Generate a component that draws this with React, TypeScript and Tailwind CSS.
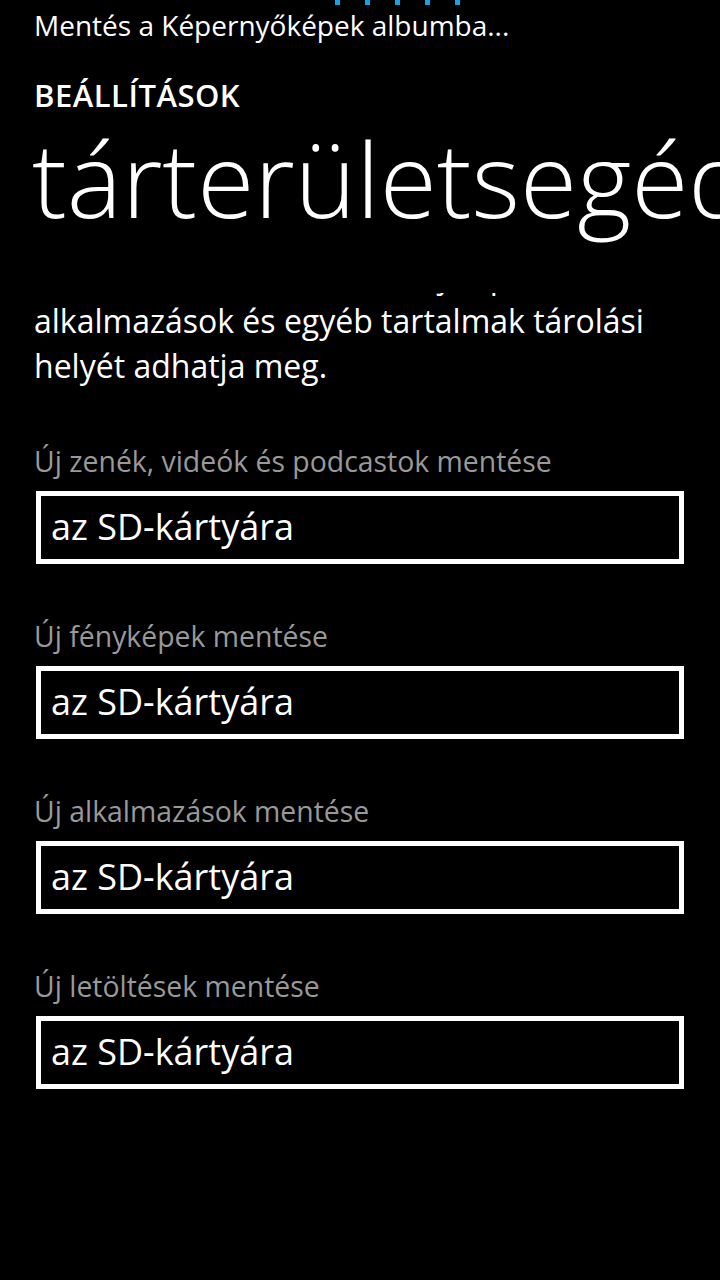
import React from "react";

const sections = [
  "Új zenék, videók és podcastok mentése",
  "Új fényképek mentése",
  "Új alkalmazások mentése",
  "Új letöltések mentése",
];

export default function App() {
  return (
    <div
      className="relative w-[720px] h-[1280px] overflow-hidden bg-black text-white"
      style={{ fontFamily: '"Open Sans", "Noto Sans", sans-serif' }}
    >
      <div className="absolute left-[335px] top-0 flex gap-[25px]">
        <div className="w-[5px] h-[5px] bg-[#1ba1e2]" />
        <div className="w-[5px] h-[5px] bg-[#1ba1e2]" />
        <div className="w-[5px] h-[5px] bg-[#1ba1e2]" />
        <div className="w-[5px] h-[5px] bg-[#1ba1e2]" />
        <div className="w-[5px] h-[5px] bg-[#1ba1e2]" />
      </div>

      <div className="pt-[5px] pl-[34px] text-[28px] leading-[40px] whitespace-nowrap">
        Mentés a Képernyőképek albumba...
      </div>

      <div className="mt-[32px] pl-[34px] text-[31px] leading-[36px] font-semibold tracking-[0.5px] whitespace-nowrap">
        BEÁLLÍTÁSOK
      </div>

      <div className="mt-[5px] pl-[32px] text-[104px] leading-[120px] font-light whitespace-nowrap">
        tárterületsegéd
      </div>

      <div className="mt-[55px] h-[95px] overflow-hidden pl-[34px]">
        <div className="-mt-[40px] text-[32px] leading-[45px]">
          <div className="whitespace-nowrap">Itt a zenék és a videók, az új képek,</div>
          <div className="whitespace-nowrap">alkalmazások és egyéb tartalmak tárolási</div>
          <div className="whitespace-nowrap">helyét adhatja meg.</div>
        </div>
      </div>

      <div className="mt-[56px] flex flex-col gap-[55px]">
        {sections.map((label) => (
          <div key={label} className="flex flex-col">
            <div className="pl-[34px] text-[28.4px] leading-[34px] text-[#999999] whitespace-nowrap">
              {label}
            </div>
            <div className="mt-[13px] ml-[36px] w-[648px] h-[73px] border-[5px] border-white pl-[10px] text-[36px] leading-[61px] whitespace-nowrap">
              az SD-kártyára
            </div>
          </div>
        ))}
      </div>
    </div>
  );
}
